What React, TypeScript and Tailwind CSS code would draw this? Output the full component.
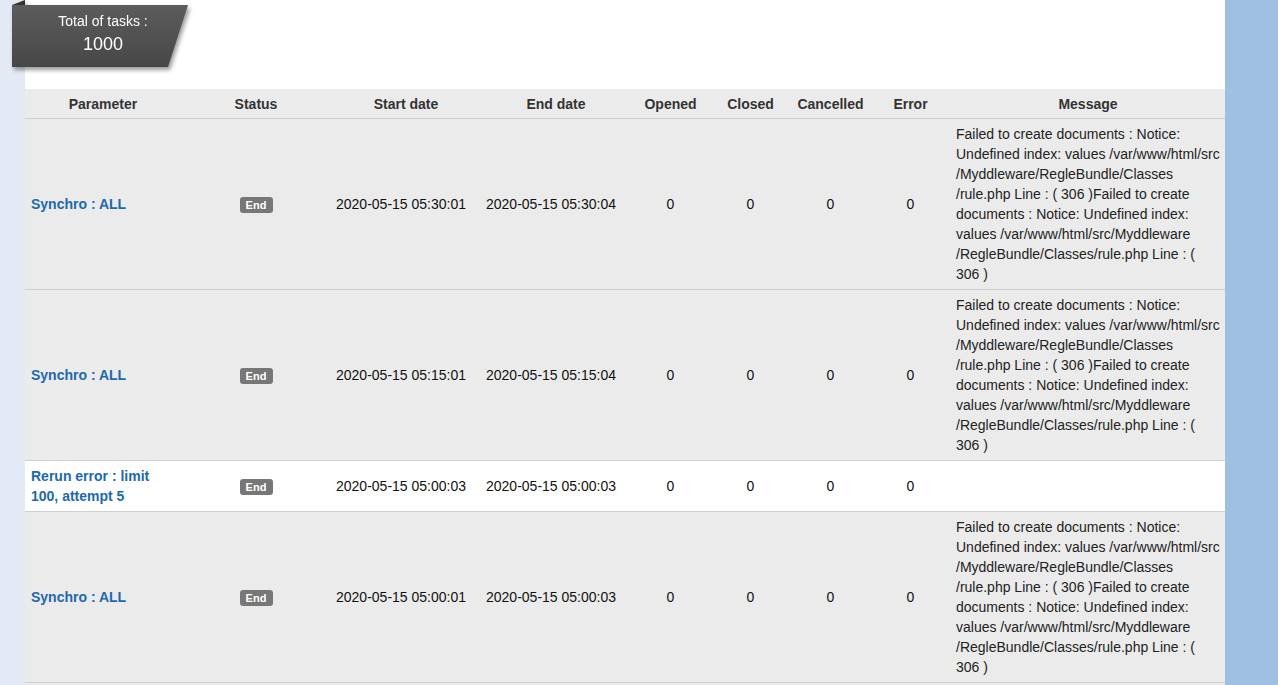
import React from "react";

type Task = {
  param: string;
  start: string;
  end: string;
  message: string[];
  white?: boolean;
};

const MSG = [
  "Failed to create documents : Notice:",
  "Undefined index: values /var/www/html/src",
  "/Myddleware/RegleBundle/Classes",
  "/rule.php Line : ( 306 )Failed to create",
  "documents : Notice: Undefined index:",
  "values /var/www/html/src/Myddleware",
  "/RegleBundle/Classes/rule.php Line : (",
  "306 )",
];

const tasks: Task[] = [
  { param: "Synchro : ALL", start: "2020-05-15 05:30:01", end: "2020-05-15 05:30:04", message: MSG },
  { param: "Synchro : ALL", start: "2020-05-15 05:15:01", end: "2020-05-15 05:15:04", message: MSG },
  { param: "Rerun error : limit 100, attempt 5", start: "2020-05-15 05:00:03", end: "2020-05-15 05:00:03", message: [], white: true },
  { param: "Synchro : ALL", start: "2020-05-15 05:00:01", end: "2020-05-15 05:00:03", message: MSG },
  { param: "Synchro : ALL", start: "2020-05-15 04:45:01", end: "2020-05-15 04:45:04", message: MSG },
];

const headers = ["Parameter", "Status", "Start date", "End date", "Opened", "Closed", "Cancelled", "Error", "Message"];

function TotalBadge() {
  return (
    <div className="ml-[-13px] flex w-[190px] flex-col drop-shadow-[2px_3px_2px_rgba(0,0,0,0.4)]">
      {/* little ribbon fold */}
      <div className="h-[5px] w-[13px] bg-[#333] [clip-path:polygon(0_100%,100%_0,100%_100%)]" />
      <div className="h-[62px] w-[176px] bg-gradient-to-b from-[#5c5c5c] to-[#474747] pl-[6px] text-center text-white [clip-path:polygon(0_0,176px_0,156px_62px,0_62px)]">
        <div className="pt-[7px] text-[14px] leading-[18px]">Total of tasks :</div>
        <div className="mt-[2px] text-[18px] leading-[24px]">1000</div>
      </div>
    </div>
  );
}

export default function App() {
  return (
    <div className="flex min-h-screen w-full bg-[#9fc0e0] font-['Liberation_Sans',Arial,sans-serif]">
      <div className="w-[25px] shrink-0 bg-[#e3eaf5]" />
      <div className="w-[1200px] shrink-0 bg-white">
        <div className="h-[89px]">
          <TotalBadge />
        </div>
        <table className="w-[1200px] table-fixed border-collapse text-[14px] leading-[20px] text-[#111]">
          <colgroup>
            <col className="w-[156px]" />
            <col className="w-[150px]" />
            <col className="w-[150px]" />
            <col className="w-[150px]" />
            <col className="w-[79px]" />
            <col className="w-[81px]" />
            <col className="w-[79px]" />
            <col className="w-[81px]" />
            <col className="w-[274px]" />
          </colgroup>
          <thead>
            <tr className="border-b border-[#cfcfcf] bg-[#ebebeb]">
              {headers.map((h) => (
                <th key={h} className="px-[5px] pb-[4px] pt-[5px] text-center font-bold text-[#333]">
                  {h}
                </th>
              ))}
            </tr>
          </thead>
          <tbody>
            {tasks.map((t, i) => (
              <tr key={i} className={`border-b border-[#cfcfcf] ${t.white ? "bg-white" : "bg-[#ebebeb]"}`}>
                <td className="py-[5px] pl-[6px] pr-[5px] align-middle">
                  <a className="font-bold text-[#1c69ad]">{t.param}</a>
                </td>
                <td className="py-[5px] text-center align-middle">
                  <span className="inline-block h-[16px] w-[33px] rounded-[3px] bg-[#777] text-center text-[11px] font-bold leading-[16px] text-white">
                    End
                  </span>
                </td>
                <td className="px-[5px] py-[5px] align-middle whitespace-nowrap">{t.start}</td>
                <td className="px-[5px] py-[5px] align-middle whitespace-nowrap">{t.end}</td>
                <td className="py-[5px] text-center align-middle">0</td>
                <td className="py-[5px] text-center align-middle">0</td>
                <td className="py-[5px] text-center align-middle">0</td>
                <td className="py-[5px] text-center align-middle">0</td>
                <td className="px-[5px] py-[5px] align-middle text-[#222]">
                  {t.message.map((line, j) => (
                    <div key={j} className="whitespace-nowrap">
                      {line}
                    </div>
                  ))}
                </td>
              </tr>
            ))}
          </tbody>
        </table>
      </div>
      <div className="flex-1" />
    </div>
  );
}
